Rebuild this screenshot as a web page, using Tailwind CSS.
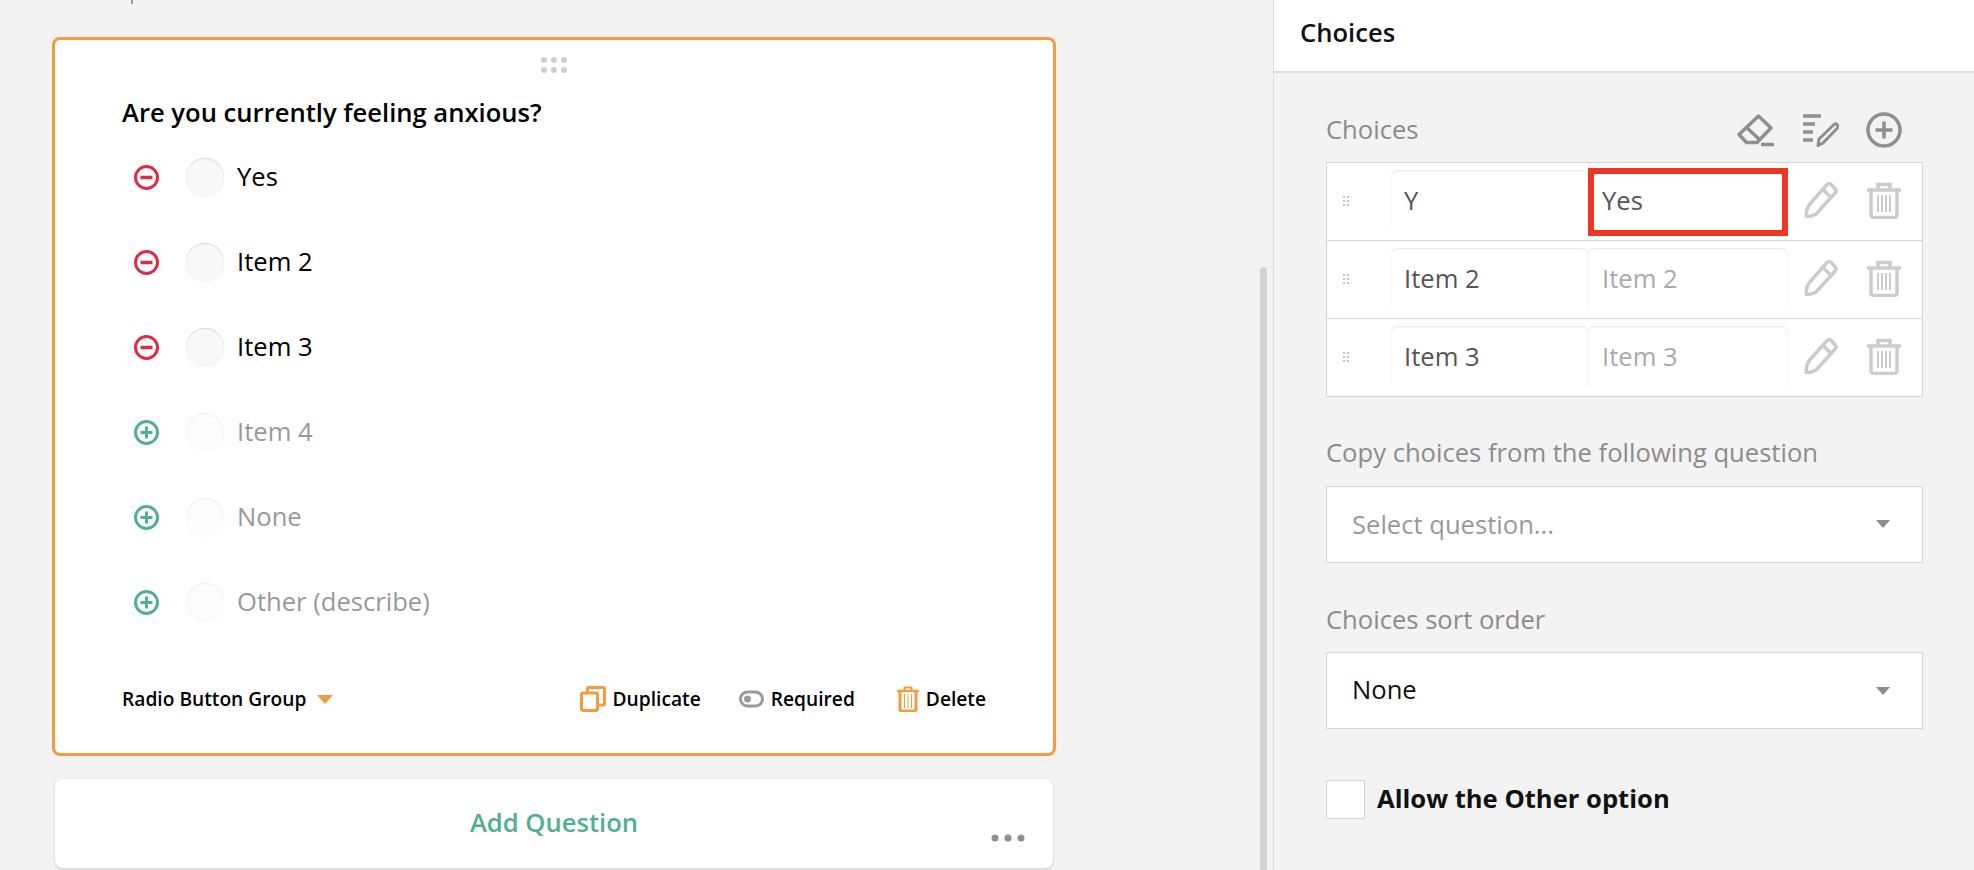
<!DOCTYPE html>
<html>
<head>
<meta charset="utf-8">
<script src="https://cdn.jsdelivr.net/npm/@tailwindcss/browser@4"></script>
</head>
<body class="m-0">
<div class="flex h-[870px] w-[1974px] overflow-hidden bg-[#f3f3f3] font-['Open_Sans',sans-serif]">
  <!-- canvas -->
  <div class="w-[1260px] shrink-0 pl-[52px]">
    <div class="ml-[79px] h-[4px] w-[2px] bg-[#9a9a9a]"></div>
    <div class="mt-[33px] flex h-[719px] w-[1004px] flex-col rounded-[8px] border-[3px] border-[#f49b3f] bg-white pl-[67px] pr-[66px]">
      <div class="mt-[17px] -ml-[67px] flex h-[16px] justify-center pl-[66px]">
        <svg width="26" height="16" viewBox="0 0 26 16" fill="#cfcfcf"><circle cx="3" cy="3" r="3"/><circle cx="13" cy="3" r="3"/><circle cx="23" cy="3" r="3"/><circle cx="3" cy="13" r="3"/><circle cx="13" cy="13" r="3"/><circle cx="23" cy="13" r="3"/></svg>
      </div>
      <div class="mt-[23px] h-[34px] text-[25.6px] font-semibold leading-[34px] text-black">Are you currently feeling anxious?</div>
      <div class="mt-[5px] flex flex-col">
        <div class="flex h-[85px] items-center pl-[12px]">
          <svg width="25" height="25" viewBox="0 0 25 25" fill="none" stroke="#dc2c44" stroke-width="3"><circle cx="12.5" cy="12.5" r="11"/><path d="M6.5 12.5h12" stroke-width="3.5"/></svg>
          <div class="ml-[27px] h-[39px] w-[38px] rounded-full bg-[#f8f8f8] shadow-[inset_0_1px_1px_#dcdcdc,0_0_1px_#e4e4e4]"></div>
          <span class="ml-[13px] text-[25.6px] text-black">Yes</span>
        </div>
        <div class="flex h-[85px] items-center pl-[12px]">
          <svg width="25" height="25" viewBox="0 0 25 25" fill="none" stroke="#dc2c44" stroke-width="3"><circle cx="12.5" cy="12.5" r="11"/><path d="M6.5 12.5h12" stroke-width="3.5"/></svg>
          <div class="ml-[27px] h-[39px] w-[38px] rounded-full bg-[#f8f8f8] shadow-[inset_0_1px_1px_#dcdcdc,0_0_1px_#e4e4e4]"></div>
          <span class="ml-[13px] text-[25.6px] text-black">Item 2</span>
        </div>
        <div class="flex h-[85px] items-center pl-[12px]">
          <svg width="25" height="25" viewBox="0 0 25 25" fill="none" stroke="#dc2c44" stroke-width="3"><circle cx="12.5" cy="12.5" r="11"/><path d="M6.5 12.5h12" stroke-width="3.5"/></svg>
          <div class="ml-[27px] h-[39px] w-[38px] rounded-full bg-[#f8f8f8] shadow-[inset_0_1px_1px_#dcdcdc,0_0_1px_#e4e4e4]"></div>
          <span class="ml-[13px] text-[25.6px] text-black">Item 3</span>
        </div>
        <div class="flex h-[85px] items-center pl-[12px]">
          <svg width="25" height="25" viewBox="0 0 25 25" fill="none" stroke="#4fb093" stroke-width="3"><circle cx="12.5" cy="12.5" r="11"/><path d="M6.5 12.5h12M12.5 6.5v12"/></svg>
          <div class="ml-[27px] h-[39px] w-[38px] rounded-full bg-[#fcfcfc] shadow-[inset_0_1px_1px_#eeeeee,0_0_1px_#f0f0f0]"></div>
          <span class="ml-[13px] text-[25.6px] text-[#999999]">Item 4</span>
        </div>
        <div class="flex h-[85px] items-center pl-[12px]">
          <svg width="25" height="25" viewBox="0 0 25 25" fill="none" stroke="#4fb093" stroke-width="3"><circle cx="12.5" cy="12.5" r="11"/><path d="M6.5 12.5h12M12.5 6.5v12"/></svg>
          <div class="ml-[27px] h-[39px] w-[38px] rounded-full bg-[#fcfcfc] shadow-[inset_0_1px_1px_#eeeeee,0_0_1px_#f0f0f0]"></div>
          <span class="ml-[13px] text-[25.6px] text-[#999999]">None</span>
        </div>
        <div class="flex h-[85px] items-center pl-[12px]">
          <svg width="25" height="25" viewBox="0 0 25 25" fill="none" stroke="#4fb093" stroke-width="3"><circle cx="12.5" cy="12.5" r="11"/><path d="M6.5 12.5h12M12.5 6.5v12"/></svg>
          <div class="ml-[27px] h-[39px] w-[38px] rounded-full bg-[#fcfcfc] shadow-[inset_0_1px_1px_#eeeeee,0_0_1px_#f0f0f0]"></div>
          <span class="ml-[13px] pb-[1px] text-[25.6px] text-[#999999]">Other (describe)</span>
        </div>
      </div>
      <div class="mt-[39px] flex h-[30px] items-center pr-[1px] text-[19.2px] font-semibold text-black">
        <span>Radio Button Group</span>
        <div class="ml-[11px] h-0 w-0 border-x-[8.5px] border-t-[9px] border-x-transparent border-t-[#f49b3f]"></div>
        <div class="ml-auto flex items-center">
          <svg width="26" height="26" viewBox="0 0 26 26" fill="none" stroke="#f49b3f" stroke-width="3"><rect x="1.5" y="7" width="16" height="17.5" rx="1.5"/><path d="M7.5 6V2.5a1 1 0 0 1 1-1h15a1 1 0 0 1 1 1V18a1 1 0 0 1-1 1H18"/></svg>
          <span class="ml-[7px]">Duplicate</span>
          <svg class="ml-[38px]" width="25" height="18" viewBox="0 0 25 18" fill="none"><rect x="1.5" y="2" width="22" height="14" rx="7" stroke="#9a9a9a" stroke-width="3"/><circle cx="8.5" cy="9" r="3.5" fill="#9a9a9a"/></svg>
          <span class="ml-[7px]">Required</span>
          <svg class="ml-[42px]" width="22" height="26" viewBox="0 0 22 26" fill="none" stroke="#f49b3f" stroke-width="2"><path d="M0 5h22" stroke-width="2.5"/><path d="M7.5 4V1.5h7V4"/><path d="M3 6v17.5a1.5 1.5 0 0 0 1.5 1.5h13a1.500 1.500 0 0 0 1.500-1.500V6" stroke-width="3"/><path d="M7.500 8v14M11 8v14M14.500 8v14" stroke-width="1"/></svg>
          <span class="ml-[7px]">Delete</span>
        </div>
      </div>
    </div>
    <div class="relative ml-[3px] mt-[23px] flex h-[89px] w-[998px] items-center justify-center rounded-[8px] bg-white shadow-[0_1px_3px_rgba(0,0,0,0.18)]">
      <span class="text-[25.6px] font-semibold text-[#4fb093]">Add Question</span>
      <svg class="absolute left-[936px] top-[53px]" width="34" height="12" viewBox="0 0 34 12" fill="#8f8f8f"><circle cx="4" cy="6" r="3.500"/><circle cx="17" cy="6" r="3.500"/><circle cx="30" cy="6" r="3.500"/></svg>
    </div>
  </div>
  <!-- scrollbar -->
  <div class="mt-[267px] h-[603px] w-[7px] shrink-0 rounded-t-[4px] bg-[#d3d3d3]"></div>
  <!-- panel -->
  <div class="ml-[6px] flex-1 border-l border-[#dcdcdc]">
    <div class="flex h-[73px] items-center border-b-2 border-[#dddddd] bg-white pl-[26px] pb-[4px] text-[25.6px] font-semibold text-[#111111]">Choices</div>
    <div class="pl-[52px] pr-[52px]">
      <div class="mt-[37px] flex h-[40px] items-center justify-between pr-[21px]">
        <span class="text-[25.6px] text-[#8c8c8c]">Choices</span>
        <div class="flex items-center">
          <svg width="37" height="33" viewBox="0 0 37 33" fill="none" stroke="#8f8f8f" stroke-width="3.500" stroke-linejoin="round"><path d="M21.500 2 34 14 20 28.500H9.500L2 20.500Z"/><path d="M8.500 12.500 23 26"/><path d="M24 30.500h13"/></svg>
          <svg class="ml-[29px]" width="36" height="34" viewBox="0 0 36 34" fill="none" stroke="#8f8f8f" stroke-width="3.500"><path d="M0 3h18M0 11h12M0 19h10M0 27h10" stroke-width="3.600"/><path d="M16 26 31 11.500a2.500 2.500 0 0 1 3.500 3.500L20 30l-5 2.500Z" stroke-linejoin="round" stroke-width="3"/></svg>
          <svg class="ml-[27px]" width="36" height="36" viewBox="0 0 36 36" fill="none" stroke="#8f8f8f" stroke-width="3.500"><circle cx="18" cy="18" r="16"/><path d="M9.500 18h17M18 9.500v17"/></svg>
        </div>
      </div>
      <div class="mt-[12px] w-[597px] border border-[#d4d4d4] bg-white">
        <div class="flex h-[78px] items-center border-b border-[#d4d4d4]">
          <svg class="ml-[16px]" width="7" height="11" viewBox="0 0 7 11" fill="#c4c4c4"><rect width="2" height="2"/><rect x="4" width="2" height="2"/><rect y="4" width="2" height="2"/><rect x="4" y="4" width="2" height="2"/><rect y="8" width="2" height="2"/><rect x="4" y="8" width="2" height="2"/></svg>
          <div class="ml-[41px] flex h-[64px] w-[197px] items-center rounded-[6px] pl-[13px] text-[25.6px] text-[#555555] shadow-[inset_0_1px_2px_#e6e6e6]">Y</div>
          <div class="flex h-[68px] w-[200px] items-center border-[6px] border-[#ee3524] pl-[8px] text-[25.6px] text-[#555555]">Yes</div>
          <svg class="mb-[3px] ml-[16px]" width="34" height="36" viewBox="0 0 34 36" fill="none" stroke="#cccccc" stroke-width="3.500" stroke-linejoin="round"><path d="M23 2.500a3 3 0 0 1 4.200 0l4 4.500a3 3 0 0 1 0 4L12 32c-3 2-8 2.500-9.500 2.500C2 31 3 26 5 23Z"/><path d="M19 7.500l9 9"/></svg>
          <svg class="mb-[3px] ml-[29px]" width="34" height="37" viewBox="0 0 34 37" fill="none" stroke="#cccccc" stroke-width="3.500"><path d="M0 8h34"/><path d="M11 7V2.500h12V7"/><path d="M4 9v24a2.500 2.500 0 0 0 2.500 2.500h21A2.500 2.500 0 0 0 30 33V9"/><path d="M11 13v17M15 13v17M19 13v17M23 13v17" stroke-width="2"/></svg>
        </div>
        <div class="flex h-[78px] items-center border-b border-[#d4d4d4]">
          <svg class="ml-[16px]" width="7" height="11" viewBox="0 0 7 11" fill="#c4c4c4"><rect width="2" height="2"/><rect x="4" width="2" height="2"/><rect y="4" width="2" height="2"/><rect x="4" y="4" width="2" height="2"/><rect y="8" width="2" height="2"/><rect x="4" y="8" width="2" height="2"/></svg>
          <div class="ml-[41px] flex h-[64px] w-[197px] items-center rounded-[6px] pl-[13px] text-[25.6px] text-[#555555] shadow-[inset_0_1px_2px_#e6e6e6]">Item 2</div>
          <div class="flex h-[64px] w-[200px] items-center rounded-[6px] pl-[14px] text-[25.6px] text-[#aaaaaa] shadow-[inset_0_1px_2px_#e6e6e6]">Item 2</div>
          <svg class="mb-[3px] ml-[16px]" width="34" height="36" viewBox="0 0 34 36" fill="none" stroke="#cccccc" stroke-width="3.500" stroke-linejoin="round"><path d="M23 2.500a3 3 0 0 1 4.200 0l4 4.500a3 3 0 0 1 0 4L12 32c-3 2-8 2.500-9.500 2.500C2 31 3 26 5 23Z"/><path d="M19 7.500l9 9"/></svg>
          <svg class="mb-[3px] ml-[29px]" width="34" height="37" viewBox="0 0 34 37" fill="none" stroke="#cccccc" stroke-width="3.500"><path d="M0 8h34"/><path d="M11 7V2.500h12V7"/><path d="M4 9v24a2.500 2.500 0 0 0 2.500 2.500h21A2.500 2.500 0 0 0 30 33V9"/><path d="M11 13v17M15 13v17M19 13v17M23 13v17" stroke-width="2"/></svg>
        </div>
        <div class="flex h-[77px] items-center">
          <svg class="ml-[16px]" width="7" height="11" viewBox="0 0 7 11" fill="#c4c4c4"><rect width="2" height="2"/><rect x="4" width="2" height="2"/><rect y="4" width="2" height="2"/><rect x="4" y="4" width="2" height="2"/><rect y="8" width="2" height="2"/><rect x="4" y="8" width="2" height="2"/></svg>
          <div class="ml-[41px] flex h-[64px] w-[197px] items-center rounded-[6px] pl-[13px] text-[25.6px] text-[#555555] shadow-[inset_0_1px_2px_#e6e6e6]">Item 3</div>
          <div class="flex h-[64px] w-[200px] items-center rounded-[6px] pl-[14px] text-[25.6px] text-[#aaaaaa] shadow-[inset_0_1px_2px_#e6e6e6]">Item 3</div>
          <svg class="mb-[3px] ml-[16px]" width="34" height="36" viewBox="0 0 34 36" fill="none" stroke="#cccccc" stroke-width="3.500" stroke-linejoin="round"><path d="M23 2.500a3 3 0 0 1 4.200 0l4 4.500a3 3 0 0 1 0 4L12 32c-3 2-8 2.500-9.500 2.500C2 31 3 26 5 23Z"/><path d="M19 7.500l9 9"/></svg>
          <svg class="mb-[3px] ml-[29px]" width="34" height="37" viewBox="0 0 34 37" fill="none" stroke="#cccccc" stroke-width="3.500"><path d="M0 8h34"/><path d="M11 7V2.500h12V7"/><path d="M4 9v24a2.500 2.500 0 0 0 2.500 2.500h21A2.500 2.500 0 0 0 30 33V9"/><path d="M11 13v17M15 13v17M19 13v17M23 13v17" stroke-width="2"/></svg>
        </div>
      </div>
      <div class="mt-[39px] h-[34px] text-[25.6px] leading-[34px] text-[#8c8c8c]">Copy choices from the following question</div>
      <div class="mt-[16px] flex h-[77px] w-[597px] items-center border border-[#d4d4d4] bg-white pl-[25px] pr-[32px] text-[25.6px] text-[#999999]">
        <span class="pt-[1px]">Select question...</span>
        <div class="ml-auto mb-[2px] h-0 w-0 border-x-[7.500px] border-t-[8px] border-x-transparent border-t-[#8c8c8c]"></div>
      </div>
      <div class="mt-[40px] h-[34px] text-[25.6px] leading-[34px] text-[#8c8c8c]">Choices sort order</div>
      <div class="mt-[15px] flex h-[77px] w-[597px] items-center border border-[#d4d4d4] bg-white pl-[25px] pr-[32px] text-[25.6px] text-[#111111]">
        <span>None</span>
        <div class="ml-auto h-0 w-0 border-x-[7.500px] border-t-[8px] border-x-transparent border-t-[#8c8c8c]"></div>
      </div>
      <div class="mt-[51px] flex items-center">
        <div class="h-[39px] w-[39px] border border-[#d4d4d4] bg-white"></div>
        <span class="ml-[12px] text-[25.6px] font-bold text-[#111111]">Allow the Other option</span>
      </div>
    </div>
  </div>
</div>
</body>
</html>
